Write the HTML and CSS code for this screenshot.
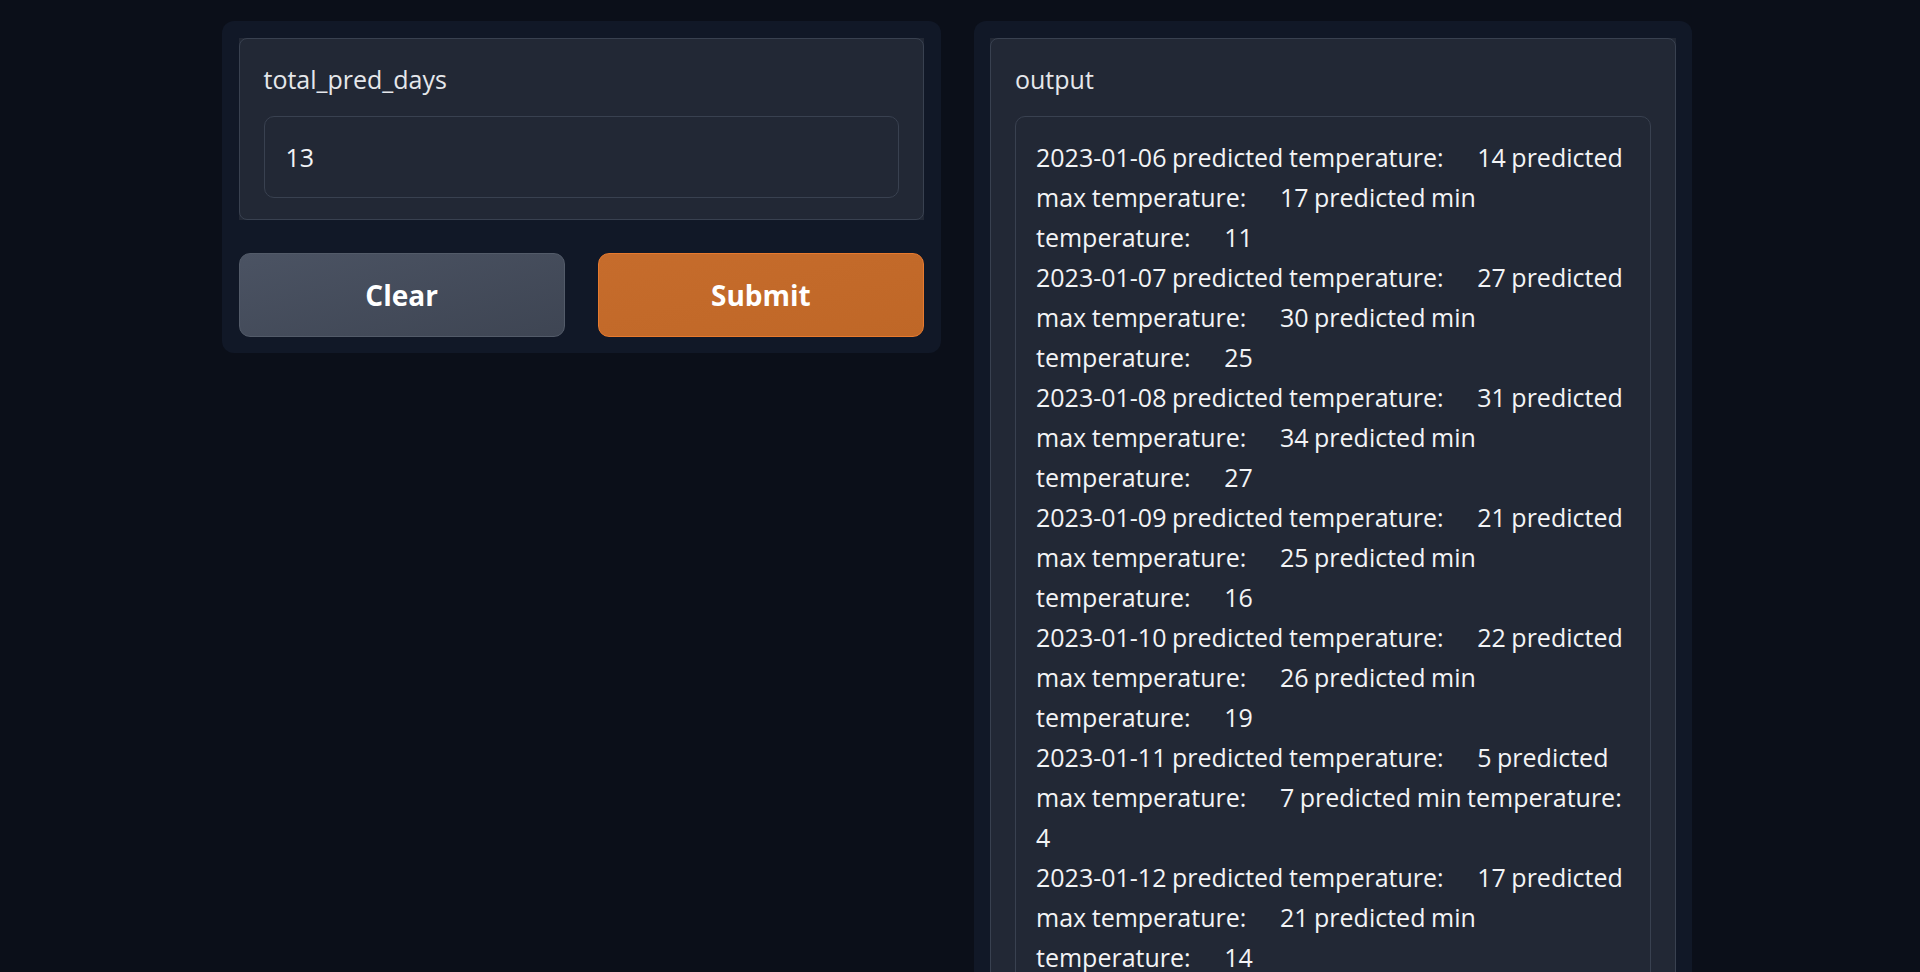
FILE: index.html
```html
<!DOCTYPE html>
<html lang="en">
<head>
<meta charset="utf-8">
<title>Temperature prediction</title>
<link rel="stylesheet" href="styles.css">
</head>
<body>
<div class="app">
  <div class="row">
    <div class="panel">
      <div class="block">
        <label class="label" for="days">total_pred_days</label>
        <input class="input" id="days" type="text" value="13">
      </div>
      <div class="buttons">
        <button class="btn secondary">Clear</button>
        <button class="btn primary">Submit</button>
      </div>
    </div>
    <div class="panel">
      <div class="block">
        <div class="label">output</div>
        <div class="textarea">2023-01-06 predicted temperature:      14 predicted max temperature:      17 predicted min temperature:      11
2023-01-07 predicted temperature:      27 predicted max temperature:      30 predicted min temperature:      25
2023-01-08 predicted temperature:      31 predicted max temperature:      34 predicted min temperature:      27
2023-01-09 predicted temperature:      21 predicted max temperature:      25 predicted min temperature:      16
2023-01-10 predicted temperature:      22 predicted max temperature:      26 predicted min temperature:      19
2023-01-11 predicted temperature:      5 predicted max temperature:      7 predicted min temperature:      4
2023-01-12 predicted temperature:      17 predicted max temperature:      21 predicted min temperature:      14</div>
      </div>
    </div>
  </div>
</div>
</body>
</html>
```

FILE: styles.css
```css
html, body {
  margin: 0;
  padding: 0;
  background: #0b0f19;
}

body {
  font-family: "Open Sans", "Noto Sans", sans-serif;
  color: #f3f4f6;
}

.app {
  padding: 21px 0 40px 222px;
}

.row {
  display: flex;
  align-items: flex-start;
  gap: 33px;
  width: 1470px;
}

.panel {
  flex: 1 1 0;
  min-width: 0;
  background: #111827;
  border-radius: 12px;
  padding: 16.5px;
}

.block {
  position: relative;
  background: #222835;
  padding: 25px 25px 22px;
  display: flex;
  flex-direction: column;
}

.block::before {
  content: "";
  position: absolute;
  inset: 0;
  border: 1px solid #394150;
  border-radius: 8px;
  pointer-events: none;
}

.label {
  display: block;
  font-size: 25px;
  line-height: 32px;
  color: #e5e7eb;
  margin-bottom: 21px;
}

.input {
  box-sizing: border-box;
  height: 82px;
  width: 100%;
  margin: 0;
  padding: 0 21px;
  background: #222835;
  border: 1px solid #394150;
  border-radius: 10px;
  color: #f3f4f6;
  font-family: "Open Sans", "Noto Sans", sans-serif;
  font-size: 25px;
  outline: none;
}

.textarea {
  border: 1px solid #394150;
  border-radius: 10px;
  padding: 20px;
  font-size: 25px;
  line-height: 40px;
  word-spacing: -0.9px;
  white-space: pre-wrap;
  color: #f3f4f6;
}

.buttons {
  display: flex;
  gap: 33px;
  margin-top: 33px;
}

.btn {
  flex: 1 1 0;
  height: 84px;
  border-radius: 11px;
  font-family: "Open Sans", "Noto Sans", sans-serif;
  font-size: 28px;
  font-weight: 700;
  color: #ffffff;
  cursor: pointer;
}

.btn.secondary {
  background: linear-gradient(to bottom right, #4b5363, #3e4553);
  border: 1px solid #535b69;
}

.btn.primary {
  background: linear-gradient(to bottom right, #c66c2c, #bf6727);
  border: 1px solid #e87a2e;
}
```
